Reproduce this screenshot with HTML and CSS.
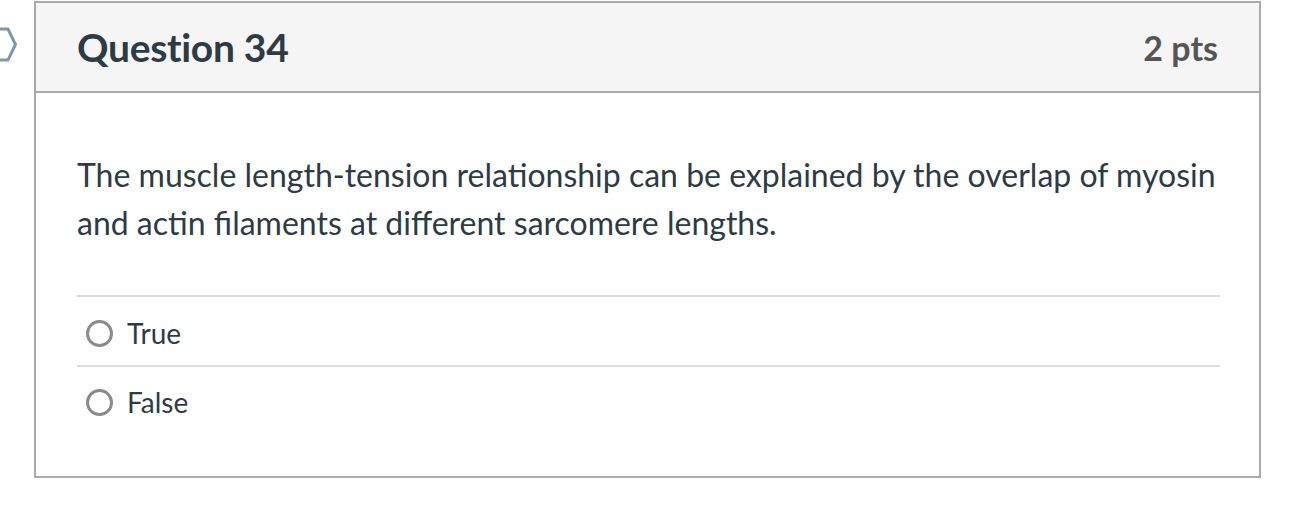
FILE: index.html
```html
<!DOCTYPE html>
<html lang="en">
<head>
    <meta charset="UTF-8">
    <meta name="viewport" content="width=device-width, initial-scale=1.0">
    <title>Question 34</title>
    <link rel="stylesheet" href="styles.css">
</head>
<body>

<div class="quiz">
    <!-- Flag marker, cut off at the window edge -->
    <div class="flag">
        <svg width="34" height="70" viewBox="0 0 34 70">
            <path d="M-10 28 H8 L15.5 43.5 L8 59 H-10" fill="none" stroke="#7d97ad" stroke-width="3" stroke-linejoin="miter"/>
        </svg>
    </div>

    <div class="question">
        <div class="question-header">
            <h3 class="question-title">Question 34</h3>
            <span class="points">2 pts</span>
        </div>
        <div class="question-body">
            <p class="question-text">The muscle length-tension relationship can be explained by the overlap of myosin and actin filaments at different sarcomere lengths.</p>
            <div class="answers">
                <label class="answer">
                    <span class="radio"></span>
                    <span class="answer-label">True</span>
                </label>
                <label class="answer">
                    <span class="radio"></span>
                    <span class="answer-label">False</span>
                </label>
            </div>
        </div>
    </div>
</div>

</body>
</html>
```

FILE: styles.css
```css
/* Global Styles */
body {
    margin: 0;
    padding: 0;
    font-family: Lato, "Open Sans", sans-serif;
    background-color: white;
    color: #2d3b45;
}
.quiz {
    display: flex;
    align-items: flex-start;
    padding-top: 1px;
}
.flag {
    width: 34px;
    flex-shrink: 0;
}
.flag svg {
    display: block;
}
/* Question card */
.question {
    width: 1223px;
    border: 2px solid #a9a9a9;
}
.question-header {
    display: flex;
    justify-content: space-between;
    align-items: center;
    height: 88px;
    padding: 0 41px;
    background-color: #f5f5f5;
    border-bottom: 2px solid #a9a9a9;
}
.question-title {
    margin: 0;
    font-size: 39px;
    font-weight: bold;
    letter-spacing: -0.3px;
}
.points {
    font-size: 34px;
    font-weight: bold;
    color: #555;
}
.question-body {
    padding: 58px 39px 43px 41px;
}
.question-text {
    margin: 0 0 48px;
    font-size: 32px;
    line-height: 48px;
}
.answers {
    border-top: 2px solid #dddddd;
}
.answer {
    display: flex;
    align-items: center;
    gap: 14px;
    height: 68px;
    box-sizing: border-box;
    padding: 4px 0 0 9px;
    font-size: 28px;
}
.answer + .answer {
    border-top: 2px solid #dddddd;
}
.radio {
    width: 21px;
    height: 21px;
    border: 3px solid #8b8b8b;
    border-radius: 50%;
}
```
